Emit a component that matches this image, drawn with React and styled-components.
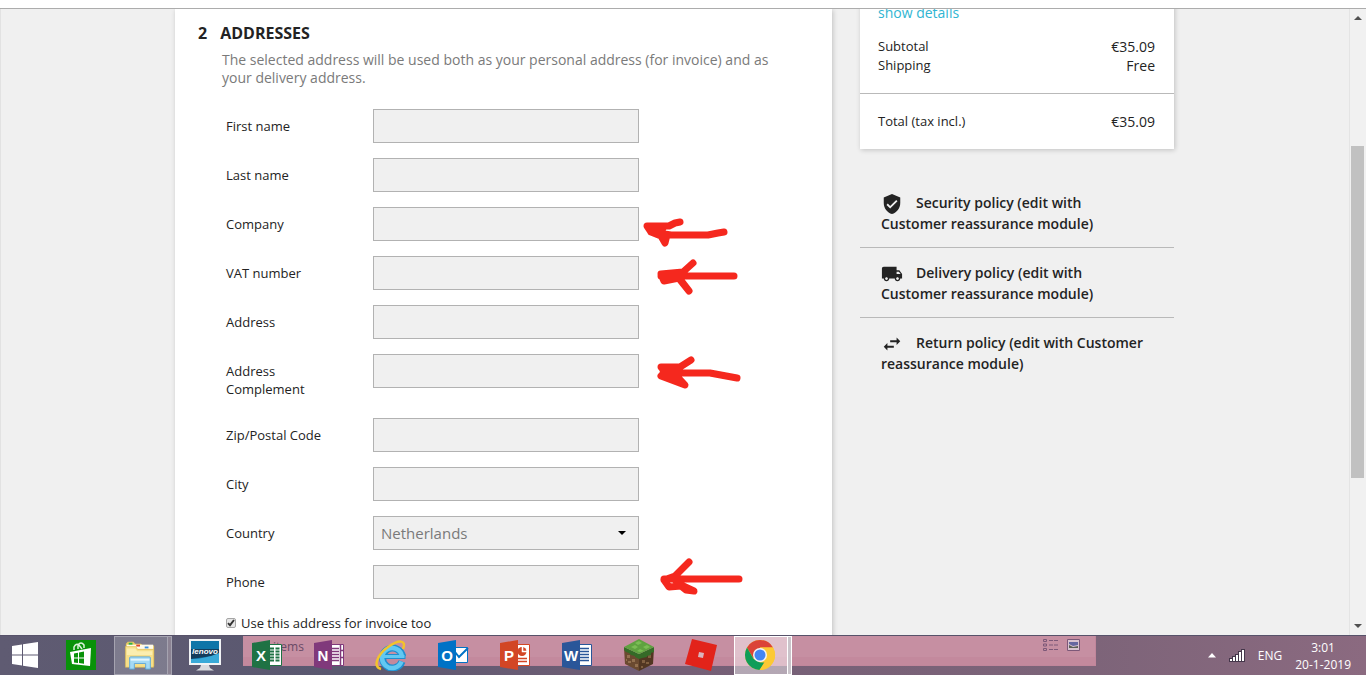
import React, {useState} from 'react';
import styled, {createGlobalStyle} from 'styled-components';
import {MdVerifiedUser, MdLocalShipping, MdSwapHoriz} from 'react-icons/md';


const GlobalStyle = createGlobalStyle`
    * {
        box-sizing: border-box;
    }
    body {
        margin: 0;
        font-family: "Open Sans", "Noto Sans", sans-serif;
        font-size: 13px;
        line-height: 18px;
        color: #232323;
    }
    h1, p, ul {
        margin: 0;
        padding: 0;
    }
`
const Screen = styled.div`
    display: flex;
    flex-direction: column;
    height: 100vh;
    overflow: hidden;
`
const TopStrip = styled.div`
    flex: none;
    height: 9px;
    background: #fff;
    border-bottom: 1px solid #acacac;
`
const Viewport = styled.div`
    flex: 1;
    min-height: 0;
    display: flex;
    background: #f0f0f0;
`
const Page = styled.main`
    flex: 1;
    display: flex;
    justify-content: center;
    gap: 28px;
    overflow: hidden;
    box-shadow: inset 1px 0 #e2e2e2;
`
const Step = styled.section`
    flex: 0 1 657px;
    align-self: flex-start;
    padding: 14px 22px 40px 23px;
    background: #fff;
    box-shadow: 1px 1px 5px 0 rgba(0, 0, 0, 0.2);
`
const StepTitle = styled.h1`
    display: flex;
    gap: 13px;
    font-size: 16px;
    line-height: 20px;
    font-weight: 700;
`
const Intro = styled.p`
    margin: 8px 28px 0 24px;
    font-size: 14px;
    color: #7a7a7a;
`
const Form = styled.form`
    display: flex;
    flex-direction: column;
    gap: 15px;
    margin: 22px 0 0 28px;
`
const FormRow = styled.div`
    display: flex;
    align-items: flex-start;
`
const Label = styled.label`
    flex: none;
    width: 147px;
    padding: 8px 40px 5px 0;
`
const Field = styled.div`
    position: relative;
    width: 266px;
`
const TextBox = styled.input`
    display: block;
    width: 100%;
    height: 34px;
    padding: 0 8px;
    border: 1px solid #b2b2b2;
    border-radius: 0;
    background: #f0f0f0;
    font: inherit;
    color: #7a7a7a;
`
const Select = styled.select`
    display: block;
    width: 100%;
    height: 34px;
    padding: 0 7px;
    border: 1px solid #b2b2b2;
    border-radius: 0;
    background: #f0f0f0;
    appearance: none;
    font: inherit;
    font-size: 15px;
    color: #7a7a7a;
`
const Caret = styled.span`
    position: absolute;
    right: 13px;
    top: 15px;
    border: 4px solid transparent;
    border-top-color: #000;
    pointer-events: none;
`
const Scribble = styled.svg`
    position: absolute;
    left: 100%;
    top: -10px;
    width: 110px;
    height: 60px;
    pointer-events: none;
    fill: none;
    stroke: #f5281e;
    stroke-width: 7px;
    stroke-linecap: round;
    stroke-linejoin: round;
`
const CheckLine = styled.label`
    display: flex;
    align-items: center;
    gap: 5px;
`
const CheckBox = styled.input`
    appearance: none;
    width: 10px;
    height: 10px;
    margin: 0;
    border: 1px solid #a5a5a5;
    border-radius: 2px;
    background: #e6e6e6;
    &:checked {
        background: #e6e6e6 url("data:image/svg+xml,%3Csvg xmlns='http://www.w3.org/2000/svg' viewBox='0 0 8 8'%3E%3Cpath d='M1 4.2l2 2L7 1' fill='none' stroke='%23333' stroke-width='1.9'/%3E%3C/svg%3E");
    }
`
const Aside = styled.aside`
    flex: 0 1 314px;
`
const Cart = styled.section`
    background: #fff;
    box-shadow: 1px 1px 5px 0 rgba(0, 0, 0, 0.2);
`
const CartBlock = styled.div`
    padding: ${props => props.$total ? '18px 19px 18px 18px' : '0 19px 18px 18px'};
    border-top: ${props => props.$total ? '1px solid #b9b9b9' : 'none'};
`
const DetailsLink = styled.a`
    display: block;
    height: 33px;
    margin-top: -5px;
    font-size: 14px;
    color: #2fb5d2;
    text-decoration: none;
`
const CartLine = styled.div`
    display: flex;
    justify-content: space-between;
    line-height: 19px;
`
const Price = styled.span`
    font-size: 14px;
`
const Policies = styled.ul`
    margin: 34px 0 0;
    list-style: none;
`
const Policy = styled.li`
    padding: 9px 28px 13px 21px;
    font-size: 14px;
    line-height: 21px;
    font-weight: 600;
    border-bottom: 1px solid #b9b9b9;
    &:not(:first-child) {
        padding-top: 14px;
    }
    &:last-child {
        border-bottom: none;
    }
    svg {
        width: 22px;
        height: 22px;
        margin: -4px 13px -4px 0;
        vertical-align: -3px;
    }
`
const ScrollBar = styled.div`
    flex: none;
    display: flex;
    flex-direction: column;
    align-items: center;
    width: 17px;
    padding: 7px 1px 7px 0;
    background: #f1f1f1;
    border-left: 1px solid #e4e4e4;
`
const ScrollArrow = styled.span`
    border: 4px solid transparent;
    border-top-width: ${props => props.$up ? 0 : 4}px;
    border-bottom-width: ${props => props.$up ? 4 : 0}px;
    border-${props => props.$up ? 'bottom' : 'top'}-color: #505050;
`
const Track = styled.div`
    flex: 1;
    display: grid;
    grid-template-rows: 126fr 332fr 146fr;
    width: 13px;
`
const Thumb = styled.div`
    grid-row: 2;
    background: #c1c1c1;
`
const TaskBar = styled.footer`
    position: relative;
    z-index: 1;
    flex: none;
    display: flex;
    height: 40px;
    background: linear-gradient(90deg, #5f5b72 0, #5a5870 25%, #755f76 50%, #7d6479 80%, #8b6a80 100%);
    border-top: 1px solid #57526a;
    color: #fff;
`
const Ghost = styled.div`
    position: absolute;
    left: 243px;
    right: 270px;
    top: 0;
    height: 30px;
    padding: 2px 22px 0 30px;
    display: flex;
    justify-content: space-between;
    background: #c68fa2;
    border: 1px solid #c1869b;
    border-width: 0 1px 1px 0;
    font-size: 12px;
    color: #6a4a66;
    box-shadow: inset 0 -8px #c3899d;
`
const GhostViews = styled.svg`
    width: 38px;
    height: 14px;
    margin-right: -8px;
`
const Apps = styled.div`
    position: relative;
    flex: 1;
    display: flex;
`
const AppButton = styled.button`
    flex: none;
    display: flex;
    align-items: center;
    justify-content: center;
    width: ${props => props.$start ? 50 : 62}px;
    padding: 0 0 2px;
    border: none;
    background: none;
    svg {
        width: 32px;
        height: 32px;
    }
`
const OpenFrame = styled.span`
    display: flex;
    align-items: center;
    justify-content: center;
    width: 58px;
    height: 39px;
    padding: 0 6px 2px 0;
    margin-bottom: -2px;
    border: 1px solid ${props => props.$active ? '#fff' : '#a5a3b0'};
    background: ${props => props.$active ? 'rgba(255, 255, 255, 0.45)' : 'rgba(255, 255, 255, 0.2)'};
    box-shadow: inset -3px 0 rgba(80, 60, 80, 0.3), inset -4px 0 ${props => props.$active ? '#fff' : '#a5a3b0'};
`
const Tray = styled.div`
    position: relative;
    display: flex;
    align-items: center;
    padding-right: 15px;
    font-size: 12px;
    svg {
        margin-right: 13px;
    }
`
const Clock = styled.time`
    margin-left: 13px;
    text-align: center;
    line-height: 17px;
`

const FIELDS = [
    {id: 'firstname', label: 'First name'},
    {id: 'lastname', label: 'Last name'},
    {id: 'company', label: 'Company', arrow: 'M85 35L79 36L69 38H32L12 35M41 25L36 26L30 29H8L12 35L22 39L26 46L28 38L10 31H24'},
    {id: 'vat', label: 'VAT number', arrow: 'M95 30H22M54 17L44 26L22 28L25 35L40 32L50 45L38 30'},
    {id: 'address1', label: 'Address'},
    {id: 'address2', label: 'Address Complement', arrow: 'M98 34L71 29H24M52 16L41 23H22L26 28L22 32L46 41L34 28'},
    {id: 'postcode', label: 'Zip/Postal Code'},
    {id: 'city', label: 'City'},
    {id: 'country', label: 'Country', options: ['Netherlands']},
    {id: 'phone', label: 'Phone', arrow: 'M100 24H25M50 7L36 21L25 25L30 32L42 31L47 35L55 36L42 30L36 25'},
]

const POLICIES = [
    {icon: MdVerifiedUser, text: 'Security policy (edit with Customer reassurance module)'},
    {icon: MdLocalShipping, text: 'Delivery policy (edit with Customer reassurance module)'},
    {icon: MdSwapHoriz, text: 'Return policy (edit with Customer reassurance module)'},
]

function WindowsLogo() {
    return (
        <svg viewBox="0 0 32 32" fill="#fff">
            <path d="M3 7l10-1.500v10H3zM14 5.300L29 3v12.500H14zM3 16.500h10v10L3 25zM14 16.500h15V29l-15-2.300z" />
        </svg>
    )
}

function StoreLogo() {
    return (
        <svg viewBox="0 0 32 32">
            <path fill="#089208" d="M1 1h30v30H1z" />
            <path fill="none" stroke="#d9f2d9" strokeWidth="1.500" d="M9 11V8q2-4 5-2l3 4M13 10V6q3-4 6 0v3" />
            <path fill="#fff" d="M5 13l21-4-1 18-18-2z" />
            <path fill="#089208" d="M9 14.500l4-.7v4.700H9zM14 13.600l5-1v6h-5zM9 19.500h4v4.500l-4-.5zM14 19.500h5v5.200l-5-.6z" />
        </svg>
    )
}

function ExplorerLogo() {
    return (
        <svg viewBox="0 0 34 32">
            <path fill="#e8c860" d="M2 4l2-2h6l2 2h6l2 2h12v22H2z" />
            <path fill="#fffbe8" d="M3 5h28v5H3z" />
            <path fill="#2db34a" d="M5 3h4v2H5z" />
            <path fill="#e0452c" d="M13 5h4v2h-4z" />
            <path fill="#3a8ede" d="M22 7h4v2h-4z" />
            <path fill="#f6df8a" stroke="#dcb850" strokeWidth=".6" d="M1.500 7h11l2 3h17v19h-30z" />
            <path fill="#fbeeb0" d="M3 9h9l2 3h16v4H3z" />
            <path fill="#a5daf5" stroke="#5fa8d8" d="M6 19q0-1 1-1h20q1 0 1 1v12h-5v-6H11v6H6z" />
            <path fill="#e4f6ff" d="M7 20h20v2H7z" />
        </svg>
    )
}

function LenovoLogo() {
    return (
        <svg viewBox="0 0 32 32">
            <path fill="#f1f3f5" d="M0 0h32v26H0z" />
            <path fill="#0f75a8" d="M2 2h28v22H2z" />
            <path fill="#143d5c" d="M2 10h28v6l-28 4z" />
            <path fill="#39a9d8" d="M2 24v-4q14 0 28-6v10z" />
            <text x="16" y="15" fill="#fff" fontSize="8" fontStyle="italic" fontWeight="700" textAnchor="middle">lenovo</text>
            <path fill="#d8dade" d="M12 26h8l1 3 4 2.500H7l4-2.500z" />
        </svg>
    )
}

function OfficeLogo({color, letter, children}) {
    return (
        <svg viewBox="0 0 32 32">
            <path fill="#fff" stroke={color} d="M15 5.500h15.500v21H15z" />
            {children || <path stroke={color} strokeWidth="1.500" d="M18 9.500h10M18 12.500h10M18 15.500h10M18 18.500h10M18 21.500h10" />}
            <path fill={color} d="M1 4l18-3v30L1 28z" />
            <text x="10" y="21.500" fill="#fff" fontSize="15" fontWeight="700" textAnchor="middle">{letter}</text>
        </svg>
    )
}

function ExplorerBrowserLogo() {
    return (
        <svg viewBox="0 0 32 32" fill="none">
            <path stroke="#1f8fd0" strokeWidth="7" d="M27 22.500a10 10 0 1 1 .5-5" />
            <path stroke="#1f8fd0" strokeWidth="5" d="M9 17.500h21.500" />
            <path stroke="#62c8f2" strokeWidth="4.500" d="M26.500 22.500a10 10 0 1 1 .5-5" />
            <path stroke="#62c8f2" strokeWidth="3" d="M9 17.500h20.500" />
            <path stroke="#f3c32c" strokeWidth="2.500" d="M6 30C-3 28 3 15 13 8s19-8 15 2" />
        </svg>
    )
}

function GrassBlockLogo() {
    return (
        <svg viewBox="0 0 32 32">
            <path fill="#6b4a30" d="M1 9l15 7v16L2 25z" />
            <path fill="#523722" d="M31 9l-15 7v16l14-7z" />
            <path fill="#93704f" d="M4 16h3v3H4zM9 20h3v3H9zM5 22h3v2H5zM12 25h3v3h-3zM3 20h1v2H3z" />
            <path fill="#805f40" d="M19 21h3v3h-3zM25 16h3v3h-3zM23 23h3v2h-3zM18 27h2v2h-2z" />
            <path fill="#356b28" d="M1 8l15 7 15-7v5l-3 1v2l-4 1v1l-5 1-3 1-4-2v-1l-4-1-2-2-3-1-2-2z" />
            <path fill="#5fa240" d="M16 0l15 8-15 7L1 8z" />
            <path fill="#7bbd55" d="M12 4l4-2 3 2-4 2zM20 8l4-2 3 2-4 2zM8 8l4-2 3 2-3 2zM14 12l3-2 4 2-4 1z" />
        </svg>
    )
}

function RobloxLogo() {
    return (
        <svg viewBox="0 0 32 32">
            <path fill="#e2231a" d="M7 0l25 6-6 26L0 25z" />
            <path fill="#d9b5bd" d="M14 13l5 1-1 5-5-1z" />
        </svg>
    )
}

function ChromeLogo() {
    return (
        <svg viewBox="0 0 32 32">
            <circle cx="16" cy="16" r="15" fill="#fcc934" />
            <path fill="#db4437" d="M3 8.500A15 15 0 0 1 29 8.500H16L9.500 19.500z" />
            <path fill="#0f9d58" d="M3 8.500l6.500 11.200L16 23.500h6L15.500 31A15 15 0 0 1 3 8.500z" />
            <path fill="#fcc934" d="M29 8.500H16l6.500 11.200L15.500 31A15 15 0 0 0 29 8.500z" />
            <circle cx="16" cy="16" r="7" fill="#f4f4f4" />
            <circle cx="16" cy="16" r="5.500" fill="#4285f4" />
        </svg>
    )
}

function Taskbar() {
    return (
        <TaskBar>
            <Ghost>
                <span>items</span>
                <GhostViews viewBox="0 0 38 14" fill="none" stroke="#7d5878">
                    <path d="M.5 1.500h3v2h-3zM.5 6h3v2h-3zM.5 10.500h3v2h-3zM6 2.500h4M11 2.500h4M6 7h4M11 7h4M6 11.500h4M11 11.500h4" />
                    <path fill="#d9c3d0" d="M24.500 1.500h12v11h-12z" />
                    <path fill="#6667a0" stroke="none" d="M26 4h9v3l-5 1-4-2z" />
                    <path fill="#5b6055" stroke="none" d="M26 7l4 2 5-1v2h-9z" />
                </GhostViews>
            </Ghost>
            <Apps>
                <AppButton $start aria-label="Start"><WindowsLogo /></AppButton>
                <AppButton aria-label="Store"><StoreLogo /></AppButton>
                <AppButton aria-label="File Explorer"><OpenFrame><ExplorerLogo /></OpenFrame></AppButton>
                <AppButton aria-label="Lenovo"><LenovoLogo /></AppButton>
                <AppButton aria-label="Excel">
                    <OfficeLogo color="#1f7244" letter="X">
                        <path stroke="#1f7244" strokeWidth="2" strokeDasharray="4 1.500" d="M19 9.500h10M19 12.500h10M19 15.500h10M19 18.500h10M19 21.500h10" />
                    </OfficeLogo>
                </AppButton>
                <AppButton aria-label="OneNote">
                    <OfficeLogo color="#80397b" letter="N">
                        <path stroke="#80397b" strokeWidth="1.500" d="M19 9.500h7M19 12.500h7M19 15.500h7M19 18.500h7M19 21.500h7M27.500 6v20M27 11.500h3M27 18.500h3" />
                    </OfficeLogo>
                </AppButton>
                <AppButton aria-label="Internet Explorer"><ExplorerBrowserLogo /></AppButton>
                <AppButton aria-label="Outlook">
                    <svg viewBox="0 0 32 32">
                        <path fill="#fff" stroke="#0072c6" d="M16 8.500h14.500v15H16z" />
                        <path fill="none" stroke="#0072c6" strokeWidth="2" d="M18 13l4 5 9-9" />
                        <path fill="#0072c6" d="M1 4l18-3v30L1 28z" />
                        <text x="10" y="21.500" fill="#fff" fontSize="15" fontWeight="700" textAnchor="middle">O</text>
                    </svg>
                </AppButton>
                <AppButton aria-label="PowerPoint">
                    <OfficeLogo color="#d24625" letter="P">
                        <circle cx="23" cy="12.500" r="4.500" fill="#d24625" />
                        <path stroke="#fff" strokeWidth="1.500" d="M23.500 7v5.500H29" fill="none" />
                        <path stroke="#d24625" strokeWidth="1.500" d="M19 19.500h9M19 22.500h9" />
                    </OfficeLogo>
                </AppButton>
                <AppButton aria-label="Word"><OfficeLogo color="#2a5699" letter="W" /></AppButton>
                <AppButton aria-label="Minecraft"><GrassBlockLogo /></AppButton>
                <AppButton aria-label="Roblox"><RobloxLogo /></AppButton>
                <AppButton aria-label="Chrome"><OpenFrame $active><ChromeLogo /></OpenFrame></AppButton>
            </Apps>
            <Tray>
                <svg width="8" height="5" viewBox="0 0 8 5"><path fill="#fff" d="M0 4.500L4 0l4 4.500z" /></svg>
                <svg width="16" height="13" viewBox="0 0 16 13">
                    <path fill="#44364a" d="M0 9h3V7h3V5h3V2h3V0h4v13H0z" />
                    <path fill="#fff" d="M1 10h2v2H1zM4 8h2v4H4zM7 6h2v6H7zM10 3h2v9h-2zM13 1h2v11h-2z" />
                </svg>
                <span>ENG</span>
                <Clock>3:01<br />20-1-2019</Clock>
            </Tray>
        </TaskBar>
    )
}

function App() {
    let [sameInvoice, setSameInvoice] = useState(true)
    return (
        <>
            <GlobalStyle />
            <Screen>
                <TopStrip />
                <Viewport>
                    <Page>
                        <Step>
                            <StepTitle><span>2</span><span>ADDRESSES</span></StepTitle>
                            <Intro>The selected address will be used both as your personal address (for invoice) and as your delivery address.</Intro>
                            <Form>
                                {FIELDS.map(field => (
                                    <FormRow key={field.id}>
                                        <Label htmlFor={field.id}>{field.label}</Label>
                                        <Field>
                                            {field.options
                                                ? <><Select id={field.id}>{field.options.map(o => <option key={o}>{o}</option>)}</Select><Caret /></>
                                                : <TextBox id={field.id} type="text" />}
                                            {field.arrow && <Scribble viewBox="0 0 110 60"><path d={field.arrow} /></Scribble>}
                                        </Field>
                                    </FormRow>
                                ))}
                                <CheckLine>
                                    <CheckBox type="checkbox" checked={sameInvoice} onChange={() => setSameInvoice(!sameInvoice)} />
                                    Use this address for invoice too
                                </CheckLine>
                            </Form>
                        </Step>
                        <Aside>
                            <Cart>
                                <CartBlock>
                                    <DetailsLink href="#details">show details</DetailsLink>
                                    <CartLine><span>Subtotal</span><Price>€35.09</Price></CartLine>
                                    <CartLine><span>Shipping</span><Price>Free</Price></CartLine>
                                </CartBlock>
                                <CartBlock $total>
                                    <CartLine><span>Total (tax incl.)</span><Price>€35.09</Price></CartLine>
                                </CartBlock>
                            </Cart>
                            <Policies>
                                {POLICIES.map(({icon: Icon, text}) => (
                                    <Policy key={text}><Icon />{text}</Policy>
                                ))}
                            </Policies>
                        </Aside>
                    </Page>
                    <ScrollBar>
                        <ScrollArrow $up />
                        <Track><Thumb /></Track>
                        <ScrollArrow />
                    </ScrollBar>
                </Viewport>
                <Taskbar />
            </Screen>
        </>
    )
}

export default App;
